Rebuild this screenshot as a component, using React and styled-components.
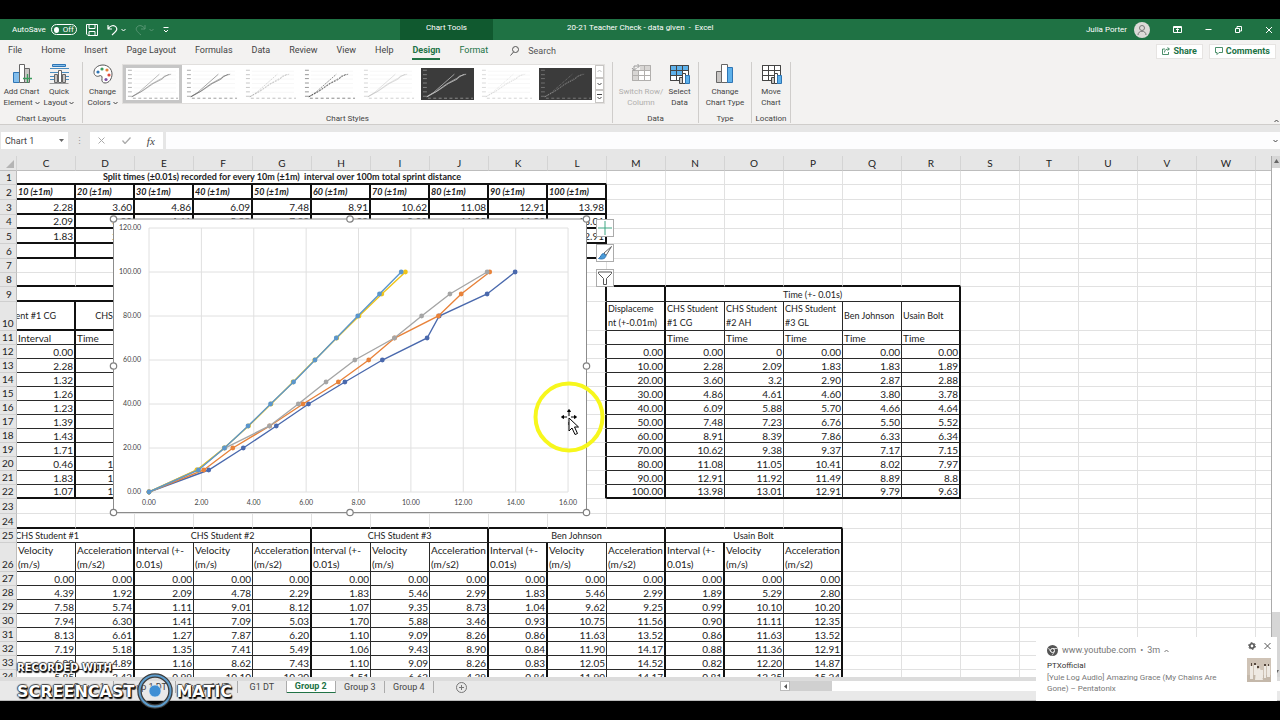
import React, { useState } from "react";
import styled, { createGlobalStyle, css } from "styled-components";

const GlobalStyle = createGlobalStyle`
  * {
    box-sizing: border-box;
  }
  body {
    margin: 0;
    background: #000;
    font-family: Roboto, "Noto Sans", sans-serif;
    font-size: 9px;
    color: #444;
  }
  button, input {
    font: inherit;
    color: inherit;
    margin: 0;
    padding: 0;
    border: 0;
    background: none;
  }
  svg {
    display: block;
    flex: none;
  }
`;

const Screen = styled.div`
  position: relative;
  display: flex;
  flex-direction: column;
  height: 100vh;
  padding: 19px 0;
  overflow: hidden;
`;

/* title bar */

const TitleBar = styled.header`
  display: flex;
  flex: none;
  height: 21px;
  background: #1f7244;
  color: #fff;
  font-size: 8px;
`;

const QuickAccess = styled.div`
  display: flex;
  align-items: center;
  gap: 9px;
  width: 400px;
  padding: 0 12px;
  line-height: 18px;
`;

const AutoSave = styled.label`
  display: flex;
  align-items: center;
  gap: 5px;
  white-space: nowrap;
`;

const SwitchTrack = styled.span`
  display: flex;
  align-items: center;
  gap: 4px;
  width: 26px;
  height: 11px;
  padding: 0 2px;
  border: 1px solid #fff;
  border-radius: 6px;
`;

const SwitchInput = styled.input`
  appearance: none;
  width: 6px;
  height: 6px;
  border-radius: 50%;
  background: #fff;
`;

const IconButton = styled.button`
  display: flex;
  align-items: center;
  gap: 3px;
  opacity: ${({ $faded }) => ($faded ? 0.25 : 1)};
`;

const ContextLabel = styled.div`
  width: 93px;
  background: #10592f;
  line-height: 18px;
  text-align: center;
`;

const FileTitle = styled.div`
  flex: 1;
  padding-left: 74px;
  line-height: 18px;
  white-space: pre;
`;

const WindowTools = styled.div`
  display: flex;
  align-items: center;
  gap: 23px;
  padding-right: 7px;
`;

const User = styled.div`
  display: flex;
  align-items: center;
  gap: 7px;
`;

/* ribbon */

const TabRow = styled.nav`
  display: flex;
  flex: none;
  align-items: center;
  gap: 19px;
  height: 22px;
  padding: 0 4px 0 8px;
  background: #f3f2f1;
`;

const RibbonTab = styled.button`
  height: 18px;
  border-bottom: 2px solid transparent;
  white-space: nowrap;
  ${({ $context }) => $context && "color: #217346;"}
  ${({ $active }) =>
    $active &&
    css`
      border-color: #217346;
      font-weight: 700;
    `}
`;

const SearchBox = styled.label`
  display: flex;
  flex: 1;
  align-items: center;
  gap: 9px;
  padding-left: 3px;

  input {
    width: 80px;
  }
  input::placeholder {
    color: #555;
    opacity: 1;
  }
`;

const ShareGroup = styled.div`
  display: flex;
  gap: 6px;
`;

const ShareButton = styled.button`
  display: flex;
  align-items: center;
  gap: 3px;
  height: 15px;
  padding: 0 5px;
  border: 1px solid #e6e4e2;
  background: #fff;
  color: #217346;
  font-weight: 700;
`;

const Ribbon = styled.section`
  display: flex;
  flex: none;
  height: 63px;
  border-bottom: 1px solid #cfcdcb;
  background: #f3f2f1;
  font-size: 8px;
`;

const Group = styled.div`
  display: flex;
  flex-direction: column;
  justify-content: space-between;
  width: ${({ $width }) => $width}px;
  margin-bottom: 1px;
  border-right: 1px solid #cfcdcb;
`;

const GroupBody = styled.div`
  display: flex;
  padding: 2px 0 0;
`;

const GroupName = styled.div`
  line-height: 9px;
  text-align: center;
`;

const BigButton = styled.button`
  display: flex;
  flex: ${({ $width }) => ($width ? "none" : 1)};
  flex-direction: column;
  align-items: center;
  gap: 2px;
  width: ${({ $width }) => $width}px;
  line-height: 11px;
  white-space: pre;
  color: ${({ disabled }) => (disabled ? "#b1afad" : "#444")};
`;

const Gallery = styled.div`
  display: flex;
  flex: 1;
  margin: 0 7px 0 0;
  height: 40px;
  border: 1px solid #e1dfdd;
  background: #fff;
`;

const Thumb = styled.button`
  flex: 1;
  height: 38px;
  border: 3px solid ${({ $selected }) => ($selected ? "#c6c6c6" : "#fff")};
  background: ${({ $dark }) => ($dark ? "#3b3b3b" : "#fff")};
`;

const GalleryScroll = styled.div`
  display: flex;
  flex-direction: column;
  width: 9px;

  button {
    display: flex;
    flex: 1;
    align-items: center;
    justify-content: center;
    border: 1px solid #c8c6c4;
  }
`;

const CollapseButton = styled.button`
  align-self: flex-end;
  margin: 0 1px 1px auto;
`;

const MenuMark = styled.svg`
  display: inline-block;
  width: 5px;
  height: 4px;
  margin-left: 2px;
`;

/* formula bar */

const FormulaRow = styled.div`
  display: flex;
  flex: none;
  align-items: center;
  height: 31px;
  padding-left: 1px;
  background: #e6e6e6;
`;

const NameBox = styled.div`
  display: flex;
  align-items: center;
  width: 67px;
  height: 17px;
  padding: 0 4px;
  background: #fff;

  input {
    flex: 1;
    min-width: 0;
  }
`;

const Grip = styled.div`
  width: 22px;
  color: #999;
  text-align: center;
`;

const FormulaButtons = styled.div`
  display: flex;
  align-items: center;
  justify-content: space-around;
  width: 73px;
  height: 17px;
  background: #fff;
`;

const FxButton = styled.button`
  font-family: "Liberation Serif", serif;
  font-size: 11px;
  font-style: italic;
`;

const FormulaField = styled.div`
  display: flex;
  flex: 1;
  align-items: center;
  height: 17px;
  margin-left: 3px;
  padding-right: 2px;
  background: #fdfdfe;

  input {
    flex: 1;
  }
`;

/* sheet */

const Sheet = styled.main`
  position: relative;
  display: flex;
  flex: 1;
  min-height: 0;
  overflow: hidden;
  background: #fff;
`;

const GridPane = styled.div`
  flex: 1;
  min-width: 0;
  overflow: hidden;
`;

const Grid = styled.table`
  width: 1315px;
  table-layout: fixed;
  border-collapse: separate;
  border-spacing: 0;
  color: #222;
  font-family: Lato, "Open Sans", sans-serif;
  font-size: 10px;
  line-height: 13px;
`;

const ColHead = styled.th`
  height: 15px;
  padding: 1px 0 0;
  border-right: 1px solid #d4d4d4;
  border-bottom: 1px solid #bdbdbd;
  background: #e6e6e6;
  font-weight: 400;
`;

const RowHead = styled.th`
  height: ${({ $height }) => $height}px;
  padding: 0 0 0 2px;
  border-right: 1px solid #bdbdbd;
  border-bottom: 1px solid #cfcfcf;
  background: #e6e6e6;
  font-weight: 400;
  text-align: ${({ $wide }) => ($wide ? "left" : "center")};
  vertical-align: bottom;
`;

const Corner = styled.svg`
  width: 8px;
  height: 8px;
  margin-left: 6px;
`;

const lines = {
  0: "1px solid #e1e1e1",
  1: "1px solid #2a2a2a",
  2: "2px solid #111",
};

const Cell = styled.td`
  padding: 0 ${({ $padRight }) => $padRight || 1}px 0 1px;
  border-right: ${({ $right }) => lines[$right]};
  border-bottom: ${({ $bottom }) => lines[$bottom]};
  overflow: hidden;
  vertical-align: ${({ $middle }) => ($middle ? "middle" : "bottom")};
  white-space: pre;
  font-size: ${({ $small }) => ($small ? 9 : 10)}px;
  line-height: ${({ $wrapped }) => ($wrapped ? 14 : 12)}px;
  ${({ $strong }) => $strong && "font-weight: 700;"}
  ${({ $slanted }) => $slanted && "font-style: italic;"}
`;

const CellText = styled.div`
  display: flex;
  justify-content: ${({ $align }) => $align};
`;

const VScroll = styled.div`
  display: flex;
  flex-direction: column;
  align-items: center;
  width: 9px;
  padding: 3px 0;
  border-left: 1px solid #ababab;
  background: #d6d6d6;
`;

const VThumb = styled.div`
  width: 8px;
  height: 444px;
  margin-top: 5px;
  margin-bottom: auto;
  background: #fff;
`;

const ChartObject = styled.figure`
  position: absolute;
  top: 63px;
  left: 113px;
  margin: 0;
  background: #fff;
  font-family: Lato, "Open Sans", sans-serif;
  font-size: 7px;

  svg {
    overflow: visible;
  }
`;

const ChartTools = styled.div`
  position: absolute;
  top: 63px;
  left: 596px;
  display: flex;
  flex-direction: column;
  gap: 7px;

  button {
    display: flex;
    align-items: center;
    justify-content: center;
    width: 18px;
    height: 18px;
    border: 1px solid #ababab;
    background: #fff;
  }
`;

const Pointer = styled.div`
  position: absolute;
  top: 225px;
  left: 533px;
`;

/* bottom bar */

const SheetBar = styled.footer`
  display: flex;
  flex: none;
  height: 24px;
  padding-bottom: 3px;
  border-top: 4px solid #dcdcdc;
  border-bottom: 1px solid #bbb;
  background: #e9e9e9;
`;

const SheetTabs = styled.div`
  display: flex;
  flex: none;
  width: 780px;
  padding-left: 65px;
`;

const SheetTab = styled.button`
  height: 12px;
  min-width: 49px;
  padding: 0 8px;
  border-right: 1px solid #ababab;
  line-height: 11px;
  white-space: nowrap;
  ${({ $active }) =>
    $active &&
    css`
      border-bottom: 1px solid #217346;
      background: #fff;
      color: #217346;
      font-weight: 700;
    `}
`;

const AddSheet = styled.button`
  height: 12px;
  margin-left: 22px;
`;

const HScroll = styled.div`
  display: flex;
  flex: 1;
  height: 10px;
  background: #d0d0d0;

  button {
    display: flex;
    align-items: center;
    justify-content: center;
    width: 10px;
    border: 1px solid #bbb;
    background: #fff;
  }
`;

const HThumb = styled.div`
  flex: 1;
  margin-left: 42px;
  background: #fff;
`;

/* overlays */

const Toast = styled.aside`
  position: absolute;
  right: 3px;
  bottom: 19px;
  display: flex;
  width: 241px;
  height: 64px;
  padding: 5px 6px 0 11px;
  background: #fff;
`;

const ToastText = styled.div`
  width: 180px;
  margin-right: auto;
  color: #777;
  font-size: 8px;
  line-height: 11px;

  p {
    margin: 0;
  }
`;

const ToastSource = styled.div`
  display: flex;
  align-items: center;
  gap: 4px;
  height: 17px;
  margin-bottom: 1px;
  font-size: 9px;

  a {
    color: #777;
    text-decoration: none;
  }
`;

const ToastTitle = styled.strong`
  display: block;
  color: #333;
  font-weight: 400;
  line-height: 12px;
`;

const ToastSide = styled.div`
  display: flex;
  flex-direction: column;
  align-items: flex-end;
  gap: 8px;

  div {
    display: flex;
    gap: 8px;
  }
`;

const Watermark = styled.div`
  position: absolute;
  bottom: 11px;
  left: 17px;
  color: #fff;
  font-family: "DejaVu Sans", sans-serif;
  font-weight: 700;
  text-shadow: 1px 1px 1px #000, -1px 0 1px #444, 0 -1px 1px #444, 1px 2px 1px #222;
`;

const WatermarkSmall = styled.div`
  font-size: 10px;
  line-height: 10px;
`;

const WatermarkName = styled.div`
  display: flex;
  align-items: center;
  gap: 3px;
  font-size: 16px;
`;

const columns = [..."CDEFGHIJKLMNOPQRSTUVW", ""];

const rowHeights = {
  2: 15, 3: 15, 5: 15, 6: 15, 9: 15, 10: 29, 23: 15, 24: 15, 26: 29,
};

const cells = {};
const put = (row, col, values) => {
  const start = columns.indexOf(col);
  values.forEach((value, i) => {
    cells[`${row}:${start + i}`] = { text: value };
  });
};
const merge = (row, col, span, text, extra) => {
  cells[`${row}:${columns.indexOf(col)}`] = { text, span, align: "center", ...extra };
};

merge(1, "C", 10, "Split times (±0.01s) recorded for every 10m (±1m)  interval over 100m total sprint distance", { padRight: 60 });
put(2, "C", [10, 20, 30, 40, 50, 60, 70, 80, 90, 100].map((m) => `${m} (±1m)`));
put(3, "C", ["2.28", "3.60", "4.86", "6.09", "7.48", "8.91", "10.62", "11.08", "12.91", "13.98"]);
put(4, "C", ["2.09", "3.20", "4.61", "5.88", "7.23", "8.39", "9.38", "11.05", "11.92", "13.01"]);
put(5, "C", ["1.83", "2.90", "4.60", "5.70", "6.76", "7.86", "9.37", "10.41", "11.49", "12.91"]);

merge(9, "C", 4, "");
merge(9, "N", 5, "Time (+- 0.01s)");
merge(10, "C", 1, "CHS Student #1 CG", { align: "flex-end", padRight: 18 });
merge(10, "D", 2, "CHS Student #2 AH");
put(10, "M", ["Displaceme\nnt (+-0.01m)", "CHS Student\n#1 CG", "CHS Student\n#2 AH", "CHS Student\n#3 GL", "Ben Johnson", "Usain Bolt"]);
put(11, "C", ["Interval", "Time"]);
put(11, "N", ["Time", "Time", "Time", "Time", "Time"]);

const intervals = ["0.00", "2.28", "1.32", "1.26", "1.23", "1.39", "1.43", "1.71", "0.46", "1.83", "1.07"];
const times = [
  ["0.00", "2.28", "3.60", "4.86", "6.09", "7.48", "8.91", "10.62", "11.08", "12.91", "13.98"],
  ["0", "2.09", "3.2", "4.61", "5.88", "7.23", "8.39", "9.38", "11.05", "11.92", "13.01"],
  ["0.00", "1.83", "2.90", "4.60", "5.70", "6.76", "7.86", "9.37", "10.41", "11.49", "12.91"],
  ["0.00", "1.83", "2.87", "3.80", "4.66", "5.50", "6.33", "7.17", "8.02", "8.89", "9.79"],
  ["0.00", "1.89", "2.88", "3.78", "4.64", "5.52", "6.34", "7.15", "7.97", "8.8", "9.63"],
];
intervals.forEach((interval, i) => {
  put(12 + i, "C", [interval, times[1][i]]);
  put(12 + i, "M", [`${i * 10}.00`, ...times.map((series) => series[i])]);
});

merge(25, "C", 2, "CHS Student #1", { align: "flex-end", padRight: 54 });
merge(25, "E", 3, "CHS Student #2");
merge(25, "H", 3, "CHS Student #3");
merge(25, "K", 3, "Ben Johnson");
merge(25, "N", 3, "Usain Bolt");
const measures = ["Velocity\n(m/s)", "Acceleration\n(m/s2)", "Interval (+-\n0.01s)"];
put(26, "C", Array.from({ length: 14 }, (_, i) => measures[i % 3]));
[
  "0.00 0.00 0.00 0.00 0.00 0.00 0.00 0.00 0.00 0.00 0.00 0.00 0.00 0.00",
  "4.39 1.92 2.09 4.78 2.29 1.83 5.46 2.99 1.83 5.46 2.99 1.89 5.29 2.80",
  "7.58 5.74 1.11 9.01 8.12 1.07 9.35 8.73 1.04 9.62 9.25 0.99 10.10 10.20",
  "7.94 6.30 1.41 7.09 5.03 1.70 5.88 3.46 0.93 10.75 11.56 0.90 11.11 12.35",
  "8.13 6.61 1.27 7.87 6.20 1.10 9.09 8.26 0.86 11.63 13.52 0.86 11.63 13.52",
  "7.19 5.18 1.35 7.41 5.49 1.06 9.43 8.90 0.84 11.90 14.17 0.88 11.36 12.91",
  "6.99 4.89 1.16 8.62 7.43 1.10 9.09 8.26 0.83 12.05 14.52 0.82 12.20 14.87",
  "5.85 3.42 0.99 10.10 10.20 1.51 6.62 4.39 0.84 11.90 14.17 0.81 12.35 15.24",
].forEach((line, i) => put(27 + i, "C", line.split(" ")));

const bottomLine = (row, c) => {
  if (row <= 6) return c <= 9 ? 2 : 0;
  if (row === 8) return c <= 4 || (c >= 10 && c <= 15) ? 2 : 0;
  if (row >= 9 && row <= 22) {
    if (c <= 4) return row <= 10 || row === 22 ? 2 : 1;
    if (c >= 10 && c <= 15) return row === 22 ? 2 : 1;
    return 0;
  }
  if (row >= 24 && c <= 13) return row === 24 ? 2 : 1;
  return 0;
};

const rightLine = (row, c) => {
  if (row >= 2 && row <= 6) return c < 9 || (c === 9 && row < 6) ? 2 : 0;
  if (row >= 9 && row <= 22) {
    if (c === 9 || c === 10 || c === 15) return 2;
    if (c === 0 && row > 9) return 2;
    return c > 10 && c < 15 ? 1 : 0;
  }
  if (row >= 25 && c <= 13) return [1, 4, 7, 8, 10, 11, 13].includes(c) ? 2 : 1;
  return 0;
};

const isNumber = (text) => /^[\d.]+$/.test(text);

const SheetRow = ({ row }) => {
  const tds = [];
  for (let c = 0; c < columns.length; c++) {
    const { text = "", span = 1, align, padRight } = cells[`${row}:${c}`] || {};
    const last = c + span - 1;
    tds.push(
      <Cell
        key={c}
        colSpan={span}
        $padRight={padRight}
        $right={span > 1 ? (row === 25 || (row === 9 && last === 15) ? 2 : 0) : rightLine(row, last)}
        $bottom={bottomLine(row, c)}
        $middle={row === 10}
        $wrapped={row === 10 || row === 26}
        $small={[1, 2, 9, 10, 25].includes(row)}
        $strong={row <= 2}
        $slanted={row === 2}
      >
        <CellText $align={align || (isNumber(text) ? "flex-end" : "flex-start")}>{text}</CellText>
      </Cell>
    );
    c = last;
  }
  return (
    <tr>
      <RowHead scope="row" $height={rowHeights[row] || 14} $wide={row > 9}>{row}</RowHead>
      {tds}
    </tr>
  );
};

const seriesColors = ["#4a69ad", "#e8823a", "#a5a5a5", "#f0c419", "#5b96cc"];
const plotX = (t) => 36 + t * 26.19;
const plotY = (d) => 273 - d * 2.2;

const SprintChart = () => (
  <ChartObject>
    <svg width="474" height="294" viewBox="0 0 474 294">
      {[0, 20, 40, 60, 80, 100, 120].map((d) => (
        <g key={d}>
          <path d={`M36 ${plotY(d)}H455`} stroke="#e0e0e0" />
          <text x="28" y={plotY(d) + 2} textAnchor="end" fill="#444">{d.toFixed(2)}</text>
        </g>
      ))}
      {[0, 2, 4, 6, 8, 10, 12, 14, 16].map((t) => (
        <g key={t}>
          <path d={`M${plotX(t)} 9V273`} stroke="#e0e0e0" />
          <text x={plotX(t)} y="286" textAnchor="middle" fill="#444">{t.toFixed(2)}</text>
        </g>
      ))}
      {times.map((series, s) => (
        <g key={s} fill={seriesColors[s]}>
          <polyline
            points={series.map((t, i) => `${plotX(Number(t))},${plotY(i * 10)}`).join(" ")}
            fill="none"
            stroke={seriesColors[s]}
            strokeWidth="1.4"
          />
          {series.map((t, i) => (
            <circle key={i} cx={plotX(Number(t))} cy={plotY(i * 10)} r="2.4" />
          ))}
        </g>
      ))}
      <rect x="0.5" y="0" width="473" height="293.5" fill="none" stroke="#8c8c8c" />
      {[0.5, 237, 473.5].map((x) =>
        [0, 147, 293.5].map((y) =>
          x === 237 && y === 147 ? null : (
            <circle key={`${x}-${y}`} cx={x} cy={y} r="3.2" fill="#fff" stroke="#808080" strokeWidth="1.2" />
          )
        )
      )}
    </svg>
  </ChartObject>
);

const Chevron = ({ up, color = "currentColor" }) => (
  <svg width="5" height="4" viewBox="0 0 5 4" fill="none" stroke={color}>
    <path d={up ? "M.5 3l2-2 2 2" : "M.5 1l2 2 2-2"} />
  </svg>
);

const ThumbChart = ({ color, width = 0.4, dash, dark }) => (
  <svg width="100%" height="32" viewBox="0 0 54 32" fill="none">
    {!dark && <path d="M8 3H51M8 7H51M8 11H51M8 15.500H51M8 20H51M8 24.500H51" stroke="#eee" strokeWidth=".5" />}
    <path d="M2 2H6M2 6.500H6M2 10.500H6M2 15H6M2 19.500H6M2 24H6M2 28.500H6" stroke={color} strokeWidth=".8" opacity=".7" />
    <path d="M7 30.500H53" stroke={color} strokeWidth=".9" strokeDasharray="3 2.500" opacity=".7" />
    <path
      d="M6 29L13 24.500 34 6M6 29L15 24 26 16 36 10.500 44 6M6 29L17 23 28 15.500 37 11 39 8 46 6"
      stroke={color}
      strokeWidth={width}
      strokeDasharray={dash}
    />
  </svg>
);

const thumbs = [
  { color: "#777", width: 0.5 },
  { color: "#666", width: 0.6 },
  { color: "#999", dash: "2 1" },
  { color: "#444", dash: "2 1", width: 0.6 },
  { color: "#b4b4b4" },
  { color: "#bbb", width: 0.8, dark: true },
  { color: "#bbb", dash: "1 1" },
  { color: "#9c9c9c", dash: "1 1", width: 0.6, dark: true },
];

const AddElementIcon = () => (
  <svg width="20" height="20" viewBox="0 0 20 20" fill="#fff" stroke="#666">
    <path d="M1.500 8.500h6v10h-6z" fill="#83beec" stroke="#2e75b5" />
    <path d="M7.500.5h5v18h-5z" />
    <path d="M12.500 4.500h5v14h-5z" fill="#c8c6c4" />
    <path d="M15.500 10v9M11 14.500h9" stroke="#3a9b5c" strokeWidth="1.300" />
  </svg>
);

const LayoutIcon = () => (
  <svg width="20" height="20" viewBox="0 0 20 20" fill="#fff" stroke="#666">
    <path d="M1 4.500h19M1 8.500h19M1 12.500h19M1 15.500h19" stroke="#4a8cbf" />
    <path d="M3.500.5h13v2h-13z" fill="#83beec" stroke="#2e75b5" />
    <path d="M5.500 10.500h3v8h-3zM13.500 10.500h3v8h-3z" fill="#c8c6c4" />
    <path d="M9.500 6.500h3v12h-3z" />
    <path d="M.5 19.500h19" stroke="#999" />
  </svg>
);

const PaletteIcon = () => (
  <svg width="20" height="20" viewBox="0 0 20 20">
    <path d="M10 1C4.500 1 .8 4.600 1 8.500c.1 3 3 4.500 5 3.500s3.500 0 3 2.500C8.500 17 9.500 19 12 19c4 0 7-4 7-9s-4-9-9-9z" fill="#fff" stroke="#555" />
    <circle cx="5" cy="8" r="1.600" fill="#2e75b5" />
    <circle cx="9" cy="5" r="1.600" fill="#3a9b5c" />
    <circle cx="14" cy="6" r="1.600" fill="#e8823a" />
    <circle cx="16" cy="11" r="1.600" fill="#e04b3c" />
    <circle cx="13" cy="15.500" r="1.600" fill="#7d4fa3" />
  </svg>
);

const TableIcon = ({ kind }) => {
  const off = kind === "switch";
  const line = off ? "#b1afad" : "#444";
  return (
    <svg width="21" height="20" viewBox="0 0 21 20" fill="none" stroke={line}>
      <path d="M1.500 1.500h18v15h-18z" fill="#fff" />
      {kind === "select" && <path d="M1.500 1.500h18v5h-18zM1.500 6.500h12v5h-12z" fill="#5eb1ea" stroke="none" />}
      {off && <path d="M1.500 6.500h6v10h-6zM7.500 1.500h12v5h-12z" fill="#d8d6d4" stroke="none" />}
      <path d="M1.500 1.500h18v15h-18zM1.500 6.500h18M1.500 11.500h18M7.500 1.500v15M13.500 1.500v15" />
      {off ? (
        <g>
          <path d="M0 0h9v6H0z" fill="#f3f2f1" stroke="none" />
          <path d="M3 6V2h5M1 4l2 2.500L5.500 4M6.500 0L8.500 2l-2 2" stroke="#999" />
        </g>
      ) : (
        <g>
          <path d="M10.500 13.500h3v6h-3z" fill="#c8c6c4" />
          <path d="M13.500 9.500h3v10h-3z" fill="#fff" />
          <path d="M16.500 11.500h4v8h-4z" fill="#5eb1ea" stroke="#2e75b5" />
        </g>
      )}
    </svg>
  );
};

const ColumnsIcon = () => (
  <svg width="20" height="20" viewBox="0 0 20 20" stroke="#666">
    <path d="M1.500 7.500h5v11h-5z" fill="#c8c6c4" />
    <path d="M6.500.5h6v18h-6z" fill="#fff" />
    <path d="M12.500 3.500h5v15h-5z" fill="#5eb1ea" stroke="#2e75b5" />
  </svg>
);

const Label = ({ top, bottom, menu }) => (
  <span>
    {top}
    {"\n"}
    {bottom}
    {menu && <MenuMark viewBox="0 0 5 4"><path d="M.5 1l2 2 2-2" fill="none" stroke="currentColor" /></MenuMark>}
  </span>
);

const menuTabs = ["File", "Home", "Insert", "Page Layout", "Formulas", "Data", "Review", "View", "Help", "Design", "Format"];
const sheetTabs = ["Group 1", "Group 1 DT", "Group 1 VT", "G1 DT", "Group 2", "Group 3", "Group 4"];

const App = () => {
  const [autoSave, setAutoSave] = useState(false);
  const [menu, setMenu] = useState("Design");
  const [sheet, setSheet] = useState("Group 2");
  const [style, setStyle] = useState(0);

  return (
    <Screen>
      <GlobalStyle />
      <TitleBar>
        <QuickAccess>
          <AutoSave>
            AutoSave
            <SwitchTrack>
              <SwitchInput type="checkbox" checked={autoSave} onChange={() => setAutoSave(!autoSave)} />
              {autoSave ? "On" : "Off"}
            </SwitchTrack>
          </AutoSave>
          <IconButton aria-label="Save">
            <svg width="12" height="12" viewBox="0 0 12 12" fill="none" stroke="#fff">
              <path d="M.5.5h11v11H2l-1.500-1.500zM3 .5v4h6v-4M3 11.500v-4h6v4" />
            </svg>
          </IconButton>
          <IconButton aria-label="Undo">
            <svg width="11" height="12" viewBox="0 0 11 12" fill="none" stroke="#fff" strokeWidth="1.200">
              <path d="M1 1v4h4M1 5C3 1.500 7 .5 9 3s0 4.500-4 8" />
            </svg>
            <Chevron />
          </IconButton>
          <IconButton aria-label="Redo" $faded>
            <svg width="11" height="12" viewBox="0 0 11 12" fill="none" stroke="#fff">
              <path d="M10 1v4H6M10 5C8 1.500 4 .5 2 3s0 4.500 4 8" />
            </svg>
            <Chevron />
          </IconButton>
          <IconButton aria-label="Customize Quick Access Toolbar">
            <svg width="6" height="6" viewBox="0 0 6 6" fill="none" stroke="#fff">
              <path d="M.5.5h5M1 3l2 2 2-2" />
            </svg>
          </IconButton>
        </QuickAccess>
        <ContextLabel>Chart Tools</ContextLabel>
        <FileTitle>20-21 Teacher Check - data given  -  Excel</FileTitle>
        <WindowTools>
          <User>
            Julia Porter
            <svg width="16" height="16" viewBox="0 0 16 16" fill="none" stroke="#777">
              <circle cx="8" cy="8" r="8" fill="#dcdad8" stroke="none" />
              <circle cx="8" cy="6" r="2.500" />
              <path d="M4 13c0-5 8-5 8 0" />
            </svg>
          </User>
          <IconButton aria-label="Ribbon Display Options">
            <svg width="9" height="7" viewBox="0 0 9 7" fill="none" stroke="#fff">
              <path d="M.5.5h8v6h-8zM.5 1.500h8M4.500 6V3M3 4l1.500-1.500L6 4" />
            </svg>
          </IconButton>
          <IconButton aria-label="Minimize">
            <svg width="7" height="7" viewBox="0 0 7 7" stroke="#fff"><path d="M.5 3.500h6" /></svg>
          </IconButton>
          <IconButton aria-label="Restore">
            <svg width="7" height="7" viewBox="0 0 7 7" fill="none" stroke="#fff">
              <path d="M.5 2.500h4v4h-4zM2 2.500v-2h4.500V5h-2" />
            </svg>
          </IconButton>
          <IconButton aria-label="Close">
            <svg width="8" height="8" viewBox="0 0 8 8" stroke="#fff"><path d="M1 1l6 6M7 1L1 7" /></svg>
          </IconButton>
        </WindowTools>
      </TitleBar>

      <TabRow>
        {menuTabs.map((tab, i) => (
          <RibbonTab key={tab} $active={tab === menu} $context={i > 8} onClick={() => setMenu(tab)}>
            {tab}
          </RibbonTab>
        ))}
        <SearchBox>
          <svg width="9" height="10" viewBox="0 0 9 10" fill="none" stroke="#555">
            <circle cx="5.500" cy="3.500" r="3" />
            <path d="M3.500 6L.5 9.500" />
          </svg>
          <input placeholder="Search" aria-label="Search" />
        </SearchBox>
        <ShareGroup>
          <ShareButton>
            <svg width="8" height="8" viewBox="0 0 8 8" fill="none" stroke="#217346" strokeWidth=".8">
              <path d="M3 2H.5v5.500h6V5M2.500 5.500C2.500 3 4 2 7 2M5.500.5L7.500 2 5.500 3.500" />
            </svg>
            Share
          </ShareButton>
          <ShareButton>
            <svg width="8" height="8" viewBox="0 0 8 8" fill="none" stroke="#217346" strokeWidth=".8">
              <path d="M.5.5h7v5H4L2 7.500v-2H.5z" />
            </svg>
            Comments
          </ShareButton>
        </ShareGroup>
      </TabRow>

      <Ribbon>
        <Group $width={83}>
          <GroupBody>
            <BigButton $width={43}><AddElementIcon /><Label top="Add Chart" bottom="Element" menu /></BigButton>
            <BigButton $width={32}><LayoutIcon /><Label top="Quick" bottom="Layout" menu /></BigButton>
          </GroupBody>
          <GroupName>Chart Layouts</GroupName>
        </Group>
        <Group $width={530}>
          <GroupBody>
            <BigButton $width={39}><PaletteIcon /><Label top="Change" bottom="Colors" menu /></BigButton>
            <Gallery>
              {thumbs.map((thumb, i) => (
                <Thumb
                  key={i}
                  aria-label={`Style ${i + 1}`}
                  $selected={i === style}
                  $dark={thumb.dark}
                  onClick={() => setStyle(i)}
                >
                  <ThumbChart {...thumb} />
                </Thumb>
              ))}
              <GalleryScroll>
                <button aria-label="Previous styles"><Chevron up color="#bbb" /></button>
                <button aria-label="Next styles"><Chevron /></button>
                <button aria-label="More styles">
                  <svg width="5" height="6" viewBox="0 0 5 6" fill="none" stroke="#444"><path d="M0 .5h5M.5 3l2 2 2-2" /></svg>
                </button>
              </GalleryScroll>
            </Gallery>
          </GroupBody>
          <GroupName>Chart Styles</GroupName>
        </Group>
        <Group $width={86}>
          <GroupBody>
            <BigButton $width={56} disabled><TableIcon kind="switch" /><Label top="Switch Row/" bottom="Column" /></BigButton>
            <BigButton $width={21}><TableIcon kind="select" /><Label top="Select" bottom="Data" /></BigButton>
          </GroupBody>
          <GroupName>Data</GroupName>
        </Group>
        <Group $width={53}>
          <GroupBody>
            <BigButton><ColumnsIcon /><Label top="Change" bottom="Chart Type" /></BigButton>
          </GroupBody>
          <GroupName>Type</GroupName>
        </Group>
        <Group $width={39}>
          <GroupBody>
            <BigButton><TableIcon kind="move" /><Label top="Move" bottom="Chart" /></BigButton>
          </GroupBody>
          <GroupName>Location</GroupName>
        </Group>
        <CollapseButton aria-label="Collapse the Ribbon"><Chevron up /></CollapseButton>
      </Ribbon>

      <FormulaRow>
        <NameBox>
          <input aria-label="Name Box" defaultValue="Chart 1" />
          <IconButton aria-label="Names">
            <svg width="5" height="3" viewBox="0 0 5 3"><path d="M0 0h5L2.500 3z" fill="#666" /></svg>
          </IconButton>
        </NameBox>
        <Grip>⋮</Grip>
        <FormulaButtons>
          <IconButton aria-label="Cancel">
            <svg width="7" height="7" viewBox="0 0 7 7" stroke="#aaa"><path d="M.5.5l6 6M6.500.5l-6 6" /></svg>
          </IconButton>
          <IconButton aria-label="Enter">
            <svg width="9" height="7" viewBox="0 0 9 7" fill="none" stroke="#aaa" strokeWidth="1.300"><path d="M.5 3.500l2.500 3 5.500-6" /></svg>
          </IconButton>
          <FxButton aria-label="Insert Function">fx</FxButton>
        </FormulaButtons>
        <FormulaField>
          <input aria-label="Formula" />
          <Chevron />
        </FormulaField>
      </FormulaRow>

      <Sheet>
        <GridPane>
          <Grid>
            <colgroup>
              <col width="17" />
              {columns.map((name) => <col key={name} width="59" />)}
            </colgroup>
            <thead>
              <tr>
                <ColHead aria-label="Select all">
                  <Corner viewBox="0 0 8 8"><path d="M8 0v8H0z" fill="#b4b4b4" /></Corner>
                </ColHead>
                {columns.map((name) => <ColHead key={name} scope="col">{name}</ColHead>)}
              </tr>
            </thead>
            <tbody>
              {Array.from({ length: 34 }, (_, i) => <SheetRow key={i} row={i + 1} />)}
            </tbody>
          </Grid>
        </GridPane>
        <VScroll>
          <svg width="5" height="4" viewBox="0 0 5 4"><path d="M0 4h5L2.500 0z" fill="#666" /></svg>
          <VThumb />
          <svg width="5" height="4" viewBox="0 0 5 4"><path d="M0 0h5L2.500 4z" fill="#666" /></svg>
        </VScroll>
        <SprintChart />
        <ChartTools>
          <button aria-label="Chart Elements">
            <svg width="14" height="14" viewBox="0 0 14 14" stroke="#3fa783"><path d="M7 0v14M0 7h14" /></svg>
          </button>
          <button aria-label="Chart Styles">
            <svg width="16" height="16" viewBox="0 0 16 16" stroke="#666">
              <path d="M14.500 1.500L7 8l2 2.500z" fill="#fff" />
              <path d="M6.500 8.500C3.500 9 4.500 12 1.500 13.500c3.500 1 7 .5 7.500-3z" fill="#4a9bd8" stroke="#2e75b5" />
            </svg>
          </button>
          <button aria-label="Chart Filters">
            <svg width="14" height="14" viewBox="0 0 14 14" fill="#fff" stroke="#555">
              <path d="M.5 1h13v1.500L8.500 7.500v6h-3v-6L.5 2.500z" />
            </svg>
          </button>
        </ChartTools>
        <Pointer>
          <svg width="72" height="73" viewBox="0 0 72 73">
            <circle cx="36" cy="36" r="33.500" fill="none" stroke="#f7f71c" strokeWidth="4" />
            <g stroke="#000" strokeWidth="1">
              <path d="M36 29v6M29 36h5M38 36h5M36 41v3" />
              <path d="M36 28.500l1.500 2h-3zM28.500 36l2-1.500v3zM43.500 36l-2-1.500v3z" />
            </g>
            <path d="M36 37v13l3-3 3 6.500 2.500-1-3-6.500h4z" fill="#fff" stroke="#000" />
          </svg>
        </Pointer>
      </Sheet>

      <SheetBar>
        <SheetTabs>
          {sheetTabs.map((tab) => (
            <SheetTab key={tab} $active={tab === sheet} onClick={() => setSheet(tab)}>{tab}</SheetTab>
          ))}
          <AddSheet aria-label="New sheet">
            <svg width="11" height="11" viewBox="0 0 11 11" fill="none" stroke="#777">
              <circle cx="5.500" cy="5.500" r="5" />
              <path d="M5.500 3v5M3 5.500h5" />
            </svg>
          </AddSheet>
        </SheetTabs>
        <HScroll>
          <button aria-label="Scroll left">
            <svg width="3" height="5" viewBox="0 0 3 5"><path d="M3 0v5L0 2.500z" fill="#555" /></svg>
          </button>
          <HThumb />
        </HScroll>
      </SheetBar>

      <Toast>
        <ToastText>
          <ToastSource>
            <svg width="11" height="11" viewBox="0 0 11 11" fill="none" stroke="#fff">
              <circle cx="5.500" cy="5.500" r="5.500" fill="#555" stroke="none" />
              <circle cx="5.500" cy="5.500" r="2" />
              <path d="M5.500 3.500h5M3.500 6.500L1.500 3M7.500 6.500l-2.500 4" strokeWidth=".7" />
            </svg>
            <a href="#youtube">www.youtube.com</a>
            <span>•</span>
            <span>3m</span>
            <Chevron up />
          </ToastSource>
          <ToastTitle>PTXofficial</ToastTitle>
          <p>[Yule Log Audio] Amazing Grace (My Chains Are Gone) – Pentatonix</p>
        </ToastText>
        <ToastSide>
          <div>
            <IconButton aria-label="Notification settings">
              <svg width="8" height="8" viewBox="0 0 8 8" fill="none" stroke="#555">
                <circle cx="4" cy="4" r="2.200" strokeWidth="1.600" />
                <circle cx="4" cy="4" r="3.400" strokeDasharray="1.800 1.760" />
              </svg>
            </IconButton>
            <IconButton aria-label="Dismiss">
              <svg width="7" height="8" viewBox="0 0 7 8" stroke="#555"><path d="M.5 1l6 6M6.500 1l-6 6" /></svg>
            </IconButton>
          </div>
          <svg width="24" height="24" viewBox="0 0 24 24">
            <path d="M0 0h24v24H0z" fill="#cfc3b6" />
            <path d="M0 17h24v7H0z" fill="#c4b8aa" />
            <path d="M3 8h3v13H3zM7 7h3v10H7zM9 12l4-2 3 12H8zM13 12h3v8h-3zM17 8h2v12h-2zM20 8h3v11h-3z" fill="#eee9e2" />
            <path d="M4 5h1v3H4zM7 5h2v2H7zM10 8h2v2h-2zM17 6h2v2h-2zM21 6h1v2h-1z" fill="#54463c" />
          </svg>
        </ToastSide>
      </Toast>

      <Watermark>
        <WatermarkSmall>RECORDED WITH</WatermarkSmall>
        <WatermarkName>
          SCREENCAST
          <svg width="36" height="36" viewBox="0 0 36 36">
            <circle cx="18" cy="18" r="15.500" fill="none" stroke="#3d3d3d" strokeWidth="4.500" />
            <circle cx="18" cy="18" r="15.500" fill="none" stroke="#5d9ccc" strokeWidth="2" />
            <circle cx="18" cy="18" r="6" fill="#3f8fd4" stroke="#dcebf7" strokeWidth=".6" />
          </svg>
          MATIC
        </WatermarkName>
      </Watermark>
    </Screen>
  );
};

export default App;
